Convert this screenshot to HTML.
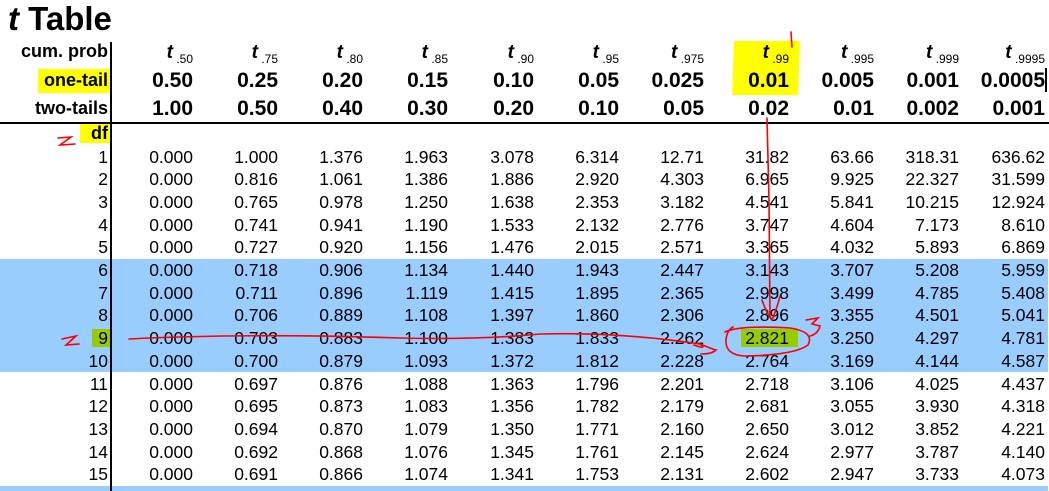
<!DOCTYPE html>
<html><head><meta charset="utf-8"><style>
*{margin:0;padding:0}
body{width:1049px;height:491px;background:#fff;position:relative;overflow:hidden;font-family:"Liberation Sans",Arial,sans-serif;color:#000}
.r{position:absolute;left:0;height:23px;line-height:23px;font-size:17.5px;white-space:nowrap}
.r span{position:absolute;text-align:right;width:85px}
.h{font-weight:bold;font-size:21px}
.hl{position:absolute}
sub{font-size:12px;font-style:normal;font-weight:normal}
</style></head><body>
<div style="position:absolute;left:8px;top:1px;font-size:33px;font-weight:bold;line-height:36px"><i>t</i> Table</div>
<div class="hl" style="left:0;top:259px;width:1048px;height:113px;background:#99ccff"></div>
<div class="hl" style="left:0;top:486px;width:1048px;height:5px;background:#99ccff"></div>
<div class="hl" style="left:38px;top:69px;width:72px;height:24px;background:#ffff00"></div>
<div class="hl" style="left:80px;top:124px;width:32px;height:19px;background:#ffff00"></div>
<div class="hl" style="left:733px;top:41px;width:66px;height:54px;background:#ffff00;transform:skewX(-2deg)"></div>
<div class="hl" style="left:92px;top:329px;width:18px;height:18px;background:#99cc00"></div>
<div class="hl" style="left:741px;top:329px;width:57px;height:18px;background:#99cc00"></div>
<div class="hl" style="left:110px;top:42px;width:2px;height:449px;background:#000"></div>
<div class="hl" style="left:0;top:122px;width:1049px;height:2px;background:#000"></div>
<div class="hl" style="left:1045px;top:68px;width:2px;height:24px;background:#000"></div>

<div class="r" style="top:40px;font-size:18px;font-weight:bold"><span style="left:3px;width:105px">cum. prob</span></div>
<div class="r" style="top:41px;font-size:19px;font-weight:bold;font-style:italic">
<span style="left:108px">t<sub> .50</sub></span>
<span style="left:193px">t<sub> .75</sub></span>
<span style="left:278px">t<sub> .80</sub></span>
<span style="left:363px">t<sub> .85</sub></span>
<span style="left:449px">t<sub> .90</sub></span>
<span style="left:534px">t<sub> .95</sub></span>
<span style="left:619px">t<sub> .975</sub></span>
<span style="left:704px">t<sub> .99</sub></span>
<span style="left:789px">t<sub> .995</sub></span>
<span style="left:874px">t<sub> .999</sub></span>
<span style="left:960px">t<sub> .9995</sub></span>
</div>
<div class="r h" style="top:69px"><span style="left:3px;width:105px;font-size:18px">one-tail</span><span style="left:108px">0.50</span><span style="left:193px">0.25</span><span style="left:278px">0.20</span><span style="left:363px">0.15</span><span style="left:449px">0.10</span><span style="left:534px">0.05</span><span style="left:619px">0.025</span><span style="left:704px">0.01</span><span style="left:789px">0.005</span><span style="left:874px">0.001</span><span style="left:960px">0.0005</span></div>
<div class="r h" style="top:97px"><span style="left:3px;width:105px;font-size:18px">two-tails</span><span style="left:108px">1.00</span><span style="left:193px">0.50</span><span style="left:278px">0.40</span><span style="left:363px">0.30</span><span style="left:449px">0.20</span><span style="left:534px">0.10</span><span style="left:619px">0.05</span><span style="left:704px">0.02</span><span style="left:789px">0.01</span><span style="left:874px">0.002</span><span style="left:960px">0.001</span></div>
<div class="r" style="top:122px;font-weight:bold;font-size:18px"><span style="left:3px;width:105px">df</span></div>

<div class="r" style="top:145.5px"><span style="left:3px;width:105px">1</span><span style="left:108px">0.000</span><span style="left:193px">1.000</span><span style="left:278px">1.376</span><span style="left:363px">1.963</span><span style="left:449px">3.078</span><span style="left:534px">6.314</span><span style="left:619px">12.71</span><span style="left:704px">31.82</span><span style="left:789px">63.66</span><span style="left:874px">318.31</span><span style="left:960px">636.62</span></div>
<div class="r" style="top:168.2px"><span style="left:3px;width:105px">2</span><span style="left:108px">0.000</span><span style="left:193px">0.816</span><span style="left:278px">1.061</span><span style="left:363px">1.386</span><span style="left:449px">1.886</span><span style="left:534px">2.920</span><span style="left:619px">4.303</span><span style="left:704px">6.965</span><span style="left:789px">9.925</span><span style="left:874px">22.327</span><span style="left:960px">31.599</span></div>
<div class="r" style="top:190.9px"><span style="left:3px;width:105px">3</span><span style="left:108px">0.000</span><span style="left:193px">0.765</span><span style="left:278px">0.978</span><span style="left:363px">1.250</span><span style="left:449px">1.638</span><span style="left:534px">2.353</span><span style="left:619px">3.182</span><span style="left:704px">4.541</span><span style="left:789px">5.841</span><span style="left:874px">10.215</span><span style="left:960px">12.924</span></div>
<div class="r" style="top:213.6px"><span style="left:3px;width:105px">4</span><span style="left:108px">0.000</span><span style="left:193px">0.741</span><span style="left:278px">0.941</span><span style="left:363px">1.190</span><span style="left:449px">1.533</span><span style="left:534px">2.132</span><span style="left:619px">2.776</span><span style="left:704px">3.747</span><span style="left:789px">4.604</span><span style="left:874px">7.173</span><span style="left:960px">8.610</span></div>
<div class="r" style="top:236.3px"><span style="left:3px;width:105px">5</span><span style="left:108px">0.000</span><span style="left:193px">0.727</span><span style="left:278px">0.920</span><span style="left:363px">1.156</span><span style="left:449px">1.476</span><span style="left:534px">2.015</span><span style="left:619px">2.571</span><span style="left:704px">3.365</span><span style="left:789px">4.032</span><span style="left:874px">5.893</span><span style="left:960px">6.869</span></div>
<div class="r" style="top:259px"><span style="left:3px;width:105px">6</span><span style="left:108px">0.000</span><span style="left:193px">0.718</span><span style="left:278px">0.906</span><span style="left:363px">1.134</span><span style="left:449px">1.440</span><span style="left:534px">1.943</span><span style="left:619px">2.447</span><span style="left:704px">3.143</span><span style="left:789px">3.707</span><span style="left:874px">5.208</span><span style="left:960px">5.959</span></div>
<div class="r" style="top:281.7px"><span style="left:3px;width:105px">7</span><span style="left:108px">0.000</span><span style="left:193px">0.711</span><span style="left:278px">0.896</span><span style="left:363px">1.119</span><span style="left:449px">1.415</span><span style="left:534px">1.895</span><span style="left:619px">2.365</span><span style="left:704px">2.998</span><span style="left:789px">3.499</span><span style="left:874px">4.785</span><span style="left:960px">5.408</span></div>
<div class="r" style="top:304.4px"><span style="left:3px;width:105px">8</span><span style="left:108px">0.000</span><span style="left:193px">0.706</span><span style="left:278px">0.889</span><span style="left:363px">1.108</span><span style="left:449px">1.397</span><span style="left:534px">1.860</span><span style="left:619px">2.306</span><span style="left:704px">2.896</span><span style="left:789px">3.355</span><span style="left:874px">4.501</span><span style="left:960px">5.041</span></div>
<div class="r" style="top:327.1px"><span style="left:3px;width:105px">9</span><span style="left:108px">0.000</span><span style="left:193px">0.703</span><span style="left:278px">0.883</span><span style="left:363px">1.100</span><span style="left:449px">1.383</span><span style="left:534px">1.833</span><span style="left:619px">2.262</span><span style="left:704px">2.821</span><span style="left:789px">3.250</span><span style="left:874px">4.297</span><span style="left:960px">4.781</span></div>
<div class="r" style="top:349.8px"><span style="left:3px;width:105px">10</span><span style="left:108px">0.000</span><span style="left:193px">0.700</span><span style="left:278px">0.879</span><span style="left:363px">1.093</span><span style="left:449px">1.372</span><span style="left:534px">1.812</span><span style="left:619px">2.228</span><span style="left:704px">2.764</span><span style="left:789px">3.169</span><span style="left:874px">4.144</span><span style="left:960px">4.587</span></div>
<div class="r" style="top:372.5px"><span style="left:3px;width:105px">11</span><span style="left:108px">0.000</span><span style="left:193px">0.697</span><span style="left:278px">0.876</span><span style="left:363px">1.088</span><span style="left:449px">1.363</span><span style="left:534px">1.796</span><span style="left:619px">2.201</span><span style="left:704px">2.718</span><span style="left:789px">3.106</span><span style="left:874px">4.025</span><span style="left:960px">4.437</span></div>
<div class="r" style="top:395.2px"><span style="left:3px;width:105px">12</span><span style="left:108px">0.000</span><span style="left:193px">0.695</span><span style="left:278px">0.873</span><span style="left:363px">1.083</span><span style="left:449px">1.356</span><span style="left:534px">1.782</span><span style="left:619px">2.179</span><span style="left:704px">2.681</span><span style="left:789px">3.055</span><span style="left:874px">3.930</span><span style="left:960px">4.318</span></div>
<div class="r" style="top:417.9px"><span style="left:3px;width:105px">13</span><span style="left:108px">0.000</span><span style="left:193px">0.694</span><span style="left:278px">0.870</span><span style="left:363px">1.079</span><span style="left:449px">1.350</span><span style="left:534px">1.771</span><span style="left:619px">2.160</span><span style="left:704px">2.650</span><span style="left:789px">3.012</span><span style="left:874px">3.852</span><span style="left:960px">4.221</span></div>
<div class="r" style="top:440.6px"><span style="left:3px;width:105px">14</span><span style="left:108px">0.000</span><span style="left:193px">0.692</span><span style="left:278px">0.868</span><span style="left:363px">1.076</span><span style="left:449px">1.345</span><span style="left:534px">1.761</span><span style="left:619px">2.145</span><span style="left:704px">2.624</span><span style="left:789px">2.977</span><span style="left:874px">3.787</span><span style="left:960px">4.140</span></div>
<div class="r" style="top:463.3px"><span style="left:3px;width:105px">15</span><span style="left:108px">0.000</span><span style="left:193px">0.691</span><span style="left:278px">0.866</span><span style="left:363px">1.074</span><span style="left:449px">1.341</span><span style="left:534px">1.753</span><span style="left:619px">2.131</span><span style="left:704px">2.602</span><span style="left:789px">2.947</span><span style="left:874px">3.733</span><span style="left:960px">4.073</span></div>

<svg style="position:absolute;left:0;top:0" width="1049" height="491" fill="none" stroke="#f00" stroke-width="1.6" stroke-linecap="round">
<path d="M791 32 L792 47"/>
<path d="M767 118 L769 200 L770 318"/>
<path d="M762 300 Q766 312 772 320 Q778 305 780 296"/>
<path d="M58 138 L71 137 L60 145 L75 144"/>
<path d="M62 339 L76 336 L66 345 L79 344"/>
<path d="M129 339 Q250 333 400 338 Q480 340 540 334 Q620 332 700 344 Q708 350 694 345"/>
<path d="M700 344 Q715 350 716 350 Q712 354 701 354"/>
<path d="M725 332 Q740 325 790 328 Q815 332 808 345 Q795 355 745 356 Q725 355 726 340 Q727 330 733 327"/>
<path d="M806 320 L818 318 L812 324 L820 326 Q818 334 810 336"/>
</svg>
</body></html>
